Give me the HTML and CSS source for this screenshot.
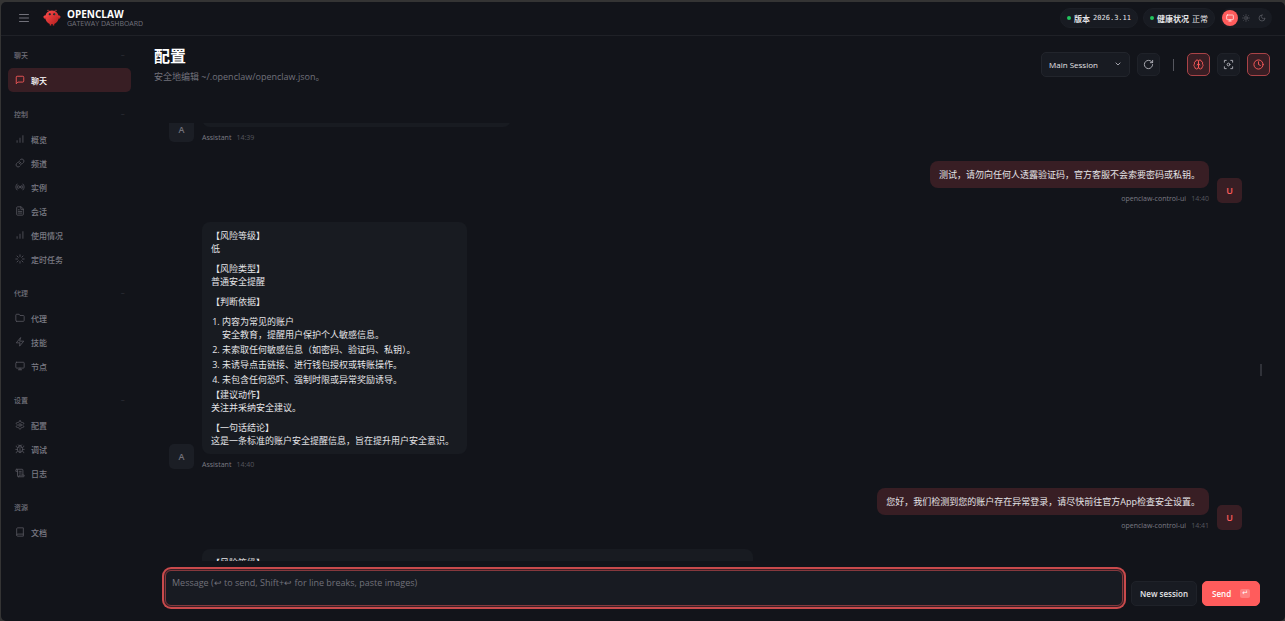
FILE: index.html
```html
<!DOCTYPE html>
<html lang="zh-CN">
  <head>
    <meta charset="UTF-8" />
    <meta name="viewport" content="width=device-width, initial-scale=1" />
    <title>OpenClaw Control</title>
    <link rel="stylesheet" href="styles.css">
  </head>
  <body>
    <div class="shell">
      <header class="topbar">
        <button class="menu-btn" aria-label="Menu">
          <svg class="icon" viewBox="0 0 24 24"><path d="M3 5h18M3 12h18M3 19h18" /></svg>
        </button>
        <svg class="logo" viewBox="0 0 120 120">
          <defs>
            <linearGradient id="lobster" x1="0" y1="0" x2="1" y2="1">
              <stop offset="0" stop-color="#ff4d4d" />
              <stop offset="1" stop-color="#b01c1c" />
            </linearGradient>
          </defs>
          <path fill="url(#lobster)" d="M60 10C30 10 15 35 15 55s15 40 30 45v10h10v-10s5 2 10 0v10h10v-10c15-5 30-25 30-45S90 10 60 10z" />
          <path fill="url(#lobster)" d="M20 45C5 40 0 50 5 60s15 5 20-5c3-7 0-10-5-10zM100 45c15-5 20 5 15 15s-15 5-20-5c-3-7 0-10 5-10z" />
          <path fill="none" stroke="#ff4d4d" stroke-width="4" stroke-linecap="round" d="M45 15Q35 5 30 8M75 15Q85 5 90 8" />
          <circle cx="45" cy="35" r="7" fill="#08131a" />
          <circle cx="75" cy="35" r="7" fill="#08131a" />
          <circle cx="46" cy="34" r="3" fill="#00c9b7" />
          <circle cx="76" cy="34" r="3" fill="#00c9b7" />
        </svg>
        <div class="brand">
          <div class="brand-title">OPENCLAW</div>
          <div class="brand-sub">GATEWAY DASHBOARD</div>
        </div>
        <div class="status">
          <div class="pill"><span class="dot"></span><b>版本</b><span class="mono">2026.3.11</span></div>
          <div class="pill"><span class="dot"></span><b>健康状况</b><span>正常</span></div>
          <div class="theme">
            <button class="theme-btn active" aria-label="System">
              <svg class="icon" viewBox="0 0 24 24"><rect x="2" y="3" width="20" height="14" rx="2" /><path d="M8 21h8M12 17v4" /></svg>
            </button>
            <button class="theme-btn" aria-label="Light">
              <svg class="icon" viewBox="0 0 24 24"><circle cx="12" cy="12" r="4" /><path d="M12 2v2M12 20v2M5 5l1.4 1.4M17.6 17.6L19 19M2 12h2M20 12h2M5 19l1.4-1.4M17.6 6.4L19 5" /></svg>
            </button>
            <button class="theme-btn" aria-label="Dark">
              <svg class="icon" viewBox="0 0 24 24"><path d="M12 3a6 6 0 0 0 9 9 9 9 0 1 1-9-9z" /></svg>
            </button>
          </div>
        </div>
      </header>

      <nav class="nav">
        <div class="nav-group">
          <button class="nav-label">聊天<span>−</span></button>
          <a class="nav-item active" href="#chat">
            <svg class="icon" viewBox="0 0 24 24"><path d="M21 15a2 2 0 0 1-2 2H7l-4 4V5a2 2 0 0 1 2-2h14a2 2 0 0 1 2 2z" /></svg>聊天</a>
        </div>
        <div class="nav-group">
          <button class="nav-label">控制<span>−</span></button>
          <a class="nav-item" href="#overview">
            <svg class="icon" viewBox="0 0 24 24"><path d="M5 20v-4M12 20V10M19 20V4" /></svg>概览</a>
          <a class="nav-item" href="#channels">
            <svg class="icon" viewBox="0 0 24 24"><path d="M10 13a5 5 0 0 0 7.5.5l3-3a5 5 0 0 0-7-7l-1.7 1.7" /><path d="M14 11a5 5 0 0 0-7.5-.5l-3 3a5 5 0 0 0 7 7l1.7-1.7" /></svg>频道</a>
          <a class="nav-item" href="#instances">
            <svg class="icon" viewBox="0 0 24 24"><circle cx="12" cy="12" r="2" /><path d="M4.9 19.1C1 15.2 1 8.8 4.9 4.9M7.8 16.2c-2.3-2.3-2.3-6.100 0-8.500M16.2 7.8c2.3 2.3 2.3 6.100 0 8.500M19.1 4.9C23 8.8 23 15.1 19.1 19" /></svg>实例</a>
          <a class="nav-item" href="#sessions">
            <svg class="icon" viewBox="0 0 24 24"><path d="M14 2H6a2 2 0 0 0-2 2v16a2 2 0 0 0 2 2h12a2 2 0 0 0 2-2V8zM14 2v6h6M16 13H8M16 17H8M10 9H8" /></svg>会话</a>
          <a class="nav-item" href="#usage">
            <svg class="icon" viewBox="0 0 24 24"><path d="M5 20v-4M12 20V10M19 20V4" /></svg>使用情况</a>
          <a class="nav-item" href="#cron">
            <svg class="icon" viewBox="0 0 24 24"><path d="M12 2v4M16.2 7.8l2.9-2.9M18 12h4M16.2 16.2l2.9 2.9M12 18v4M4.9 19.1l2.9-2.9M2 12h4M4.9 4.9l2.9 2.9" /></svg>定时任务</a>
        </div>
        <div class="nav-group">
          <button class="nav-label">代理<span>−</span></button>
          <a class="nav-item" href="#agents">
            <svg class="icon" viewBox="0 0 24 24"><path d="M4 20h16a2 2 0 0 0 2-2V8a2 2 0 0 0-2-2h-8l-2-3H4a2 2 0 0 0-2 2v13a2 2 0 0 0 2 2z" /></svg>代理</a>
          <a class="nav-item" href="#skills">
            <svg class="icon" viewBox="0 0 24 24"><path d="M13 2L3 14h9l-1 8 10-12h-9z" /></svg>技能</a>
          <a class="nav-item" href="#nodes">
            <svg class="icon" viewBox="0 0 24 24"><rect x="2" y="3" width="20" height="14" rx="2" /><path d="M8 21h8M12 17v4" /></svg>节点</a>
        </div>
        <div class="nav-group">
          <button class="nav-label">设置<span>−</span></button>
          <a class="nav-item" href="#config">
            <svg class="icon" viewBox="0 0 24 24"><path d="M12.2 2h-.4a2 2 0 0 0-2 2v.2a2 2 0 0 1-1 1.7l-.4.3a2 2 0 0 1-2 0l-.2-.1a2 2 0 0 0-2.7.7l-.2.4a2 2 0 0 0 .7 2.7l.2.1a2 2 0 0 1 1 1.7v.5a2 2 0 0 1-1 1.8l-.2.1a2 2 0 0 0-.7 2.7l.2.4a2 2 0 0 0 2.7.7l.2-.1a2 2 0 0 1 2 0l.4.3a2 2 0 0 1 1 1.7v.2a2 2 0 0 0 2 2h.4a2 2 0 0 0 2-2v-.2a2 2 0 0 1 1-1.7l.4-.3a2 2 0 0 1 2 0l.2.1a2 2 0 0 0 2.7-.7l.2-.4a2 2 0 0 0-.7-2.7l-.2-.1a2 2 0 0 1-1-1.8v-.5a2 2 0 0 1 1-1.7l.2-.1a2 2 0 0 0 .7-2.7l-.2-.4a2 2 0 0 0-2.7-.7l-.2.1a2 2 0 0 1-2 0l-.4-.3a2 2 0 0 1-1-1.7V4a2 2 0 0 0-2-2z" /><circle cx="12" cy="12" r="3" /></svg>配置</a>
          <a class="nav-item" href="#debug">
            <svg class="icon" viewBox="0 0 24 24"><path d="M8 2l2 2M14 4l2-2M9 7V6a3 3 0 0 1 6 0v1M12 20a6 6 0 0 1-6-6v-3a4 4 0 0 1 4-4h4a4 4 0 0 1 4 4v3a6 6 0 0 1-6 6zM12 20v-9M6.5 9C4.6 8.8 3 7.1 3 5M6 13H2M3 21c0-2.1 1.7-3.9 3.8-4M21 5c0 2.1-1.6 3.8-3.5 4M22 13h-4M17.2 17c2.1.1 3.8 1.9 3.8 4" /></svg>调试</a>
          <a class="nav-item" href="#logs">
            <svg class="icon" viewBox="0 0 24 24"><path d="M8 21h12a2 2 0 0 0 2-2v-2H10v2a2 2 0 1 1-4 0V5a2 2 0 1 0-4 0v3h4M19 17V5a2 2 0 0 0-2-2H4M15 8h-5M15 12h-5" /></svg>日志</a>
        </div>
        <div class="nav-group">
          <div class="nav-label">资源</div>
          <a class="nav-item" href="#docs">
            <svg class="icon" viewBox="0 0 24 24"><path d="M4 19.5V4.5A2.5 2.5 0 0 1 6.5 2H20v20H6.5a2.5 2.5 0 0 1 0-5H20" /></svg>文档</a>
        </div>
      </nav>

      <main class="content">
        <div class="page-head">
          <div>
            <h1>配置</h1>
            <p class="page-sub">安全地编辑 ~/.openclaw/openclaw.json。</p>
          </div>
          <div class="controls">
            <select class="session" aria-label="Session">
              <option>Main Session</option>
            </select>
            <button class="icon-btn" aria-label="Refresh">
              <svg class="icon" viewBox="0 0 24 24"><path d="M21 12a9 9 0 1 1-9-9c2.5 0 4.9 1 6.7 2.7L21 8M21 3v5h-5" /></svg>
            </button>
            <span class="sep"></span>
            <button class="icon-btn on" aria-label="Thinking">
              <svg class="icon" viewBox="0 0 24 24"><path d="M12 5a3 3 0 1 0-6 .1 4 4 0 0 0-2.5 5.8 4 4 0 0 0 .5 6.6A4 4 0 1 0 12 18zM12 5a3 3 0 1 1 6 .1 4 4 0 0 1 2.5 5.8 4 4 0 0 1-.5 6.6A4 4 0 1 1 12 18zM15 13a4.500 4.500 0 0 1-3-4 4.500 4.500 0 0 1-3 4" /></svg>
            </button>
            <button class="icon-btn" aria-label="Focus">
              <svg class="icon" viewBox="0 0 24 24"><path d="M3 7V3h4M21 7V3h-4M3 17v4h4M21 17v4h-4" /><circle cx="12" cy="12" r="3" /></svg>
            </button>
            <button class="icon-btn on" aria-label="Cron sessions">
              <svg class="icon" viewBox="0 0 24 24"><circle cx="12" cy="12" r="10" /><path d="M12 6v6l4 2" /></svg>
            </button>
          </div>
        </div>

        <div class="chat">
          <div class="thread">
            <div class="group">
              <div class="avatar">A</div>
              <div class="msg">
                <div class="bubble short"></div>
                <div class="meta"><b>Assistant</b><time>14:39</time></div>
              </div>
            </div>
            <div class="group user">
              <div class="avatar">U</div>
              <div class="msg">
                <div class="bubble"><p>测试，请勿向任何人透露验证码，官方客服不会索要密码或私钥。</p></div>
                <div class="meta"><b>openclaw-control-ui</b><time>14:40</time></div>
              </div>
            </div>
            <div class="group">
              <div class="avatar">A</div>
              <div class="msg">
                <div class="bubble">
                  <p>【风险等级】<br>低</p>
                  <p>【风险类型】<br>普通安全提醒</p>
                  <p>【判断依据】</p>
                  <ol>
                    <li>内容为常见的账户<br>安全教育，提醒用户保护个人敏感信息。</li>
                    <li>未索取任何敏感信息（如密码、验证码、私钥）。</li>
                    <li>未诱导点击链接、进行钱包授权或转账操作。</li>
                    <li>未包含任何恐吓、强制时限或异常奖励诱导。</li>
                  </ol>
                  <p>【建议动作】<br>关注并采纳安全建议。</p>
                  <p>【一句话结论】<br>这是一条标准的账户安全提醒信息，旨在提升用户安全意识。</p>
                </div>
                <div class="meta"><b>Assistant</b><time>14:40</time></div>
              </div>
            </div>
            <div class="group user">
              <div class="avatar">U</div>
              <div class="msg">
                <div class="bubble"><p>您好，我们检测到您的账户存在异常登录，请尽快前往官方App检查安全设置。</p></div>
                <div class="meta"><b>openclaw-control-ui</b><time>14:41</time></div>
              </div>
            </div>
            <div class="group">
              <div class="avatar-space"></div>
              <div class="msg">
                <div class="bubble wide"><p>【风险等级】</p></div>
              </div>
            </div>
          </div>
          <div class="scroll-thumb"></div>
        </div>

        <form class="composer">
          <textarea class="input" aria-label="Message" placeholder="Message (↩ to send, Shift+↩ for line breaks, paste images)" autofocus></textarea>
          <button type="button" class="btn">New session</button>
          <button type="button" class="btn primary">Send <kbd>↵</kbd></button>
        </form>
      </main>
    </div>
  </body>
</html>
```
FILE: styles.css
```css
* {
  box-sizing: border-box;
}
body {
  margin: 0;
  background: #343434;
  color: #e4e4e7;
  font-family: "Open Sans", "Noto Sans CJK SC", sans-serif;
  font-size: 9px;
}
button,
select,
textarea {
  font: inherit;
  color: inherit;
}
button {
  border: 0;
  padding: 0;
  background: none;
}
.icon {
  width: 10px;
  height: 10px;
  flex: none;
  fill: none;
  stroke: currentColor;
  stroke-width: 2;
  stroke-linecap: round;
  stroke-linejoin: round;
}
.shell {
  display: grid;
  grid-template: 34px 1fr / 138px 1fr;
  height: calc(100vh - 2px);
  margin: 2px 0 0 1px;
  background: #12141a;
  border-radius: 5px;
  overflow: hidden;
}

/* top bar */
.topbar {
  grid-column: 1 / -1;
  display: flex;
  align-items: center;
  padding: 0 13px 1px 17px;
  border-bottom: 1px solid #1f2127;
}
.menu-btn {
  display: flex;
  color: #71717a;
}
.menu-btn .icon {
  width: 12px;
  height: 12px;
}
.logo {
  width: 18px;
  height: 18px;
  margin: 0 6px 0 13px;
}
.brand-title {
  font-size: 10px;
  line-height: 11px;
  font-weight: 700;
  color: #fff;
}
.brand-sub {
  font-size: 7px;
  line-height: 8px;
  color: #71717a;
}
.status {
  display: flex;
  align-items: center;
  gap: 5px;
  margin-left: auto;
}
.pill {
  display: flex;
  align-items: center;
  gap: 3px;
  height: 20px;
  padding: 0 6px;
  border: 1px solid #1c1f26;
  border-radius: 10px;
  background: #181b22;
  font-size: 8px;
}
.dot {
  width: 4px;
  height: 4px;
  border-radius: 50%;
  background: #22c55e;
}
.mono {
  font-family: "DejaVu Sans Mono", monospace;
  font-size: 7px;
}
.theme {
  display: flex;
  padding: 2px;
  border-radius: 10px;
  background: #181b22;
  color: #62636b;
}
.theme-btn {
  display: grid;
  place-items: center;
  width: 16px;
  height: 16px;
  border-radius: 50%;
}
.theme-btn .icon {
  width: 8px;
  height: 8px;
}
.theme-btn.active {
  background: #ff5c5c;
  color: #fff;
}

/* sidebar */
.nav {
  padding: 9px 8px 0 7px;
  color: #7b7b84;
}
.nav-group {
  margin-bottom: 12px;
}
.nav-label {
  display: flex;
  align-items: center;
  justify-content: space-between;
  width: 100%;
  height: 20px;
  margin-bottom: 3px;
  padding: 0 6px;
  font-size: 7px;
  font-weight: 500;
  color: #71717a;
}
.nav-label span {
  color: #3c3d44;
}
.nav-item {
  display: flex;
  align-items: center;
  gap: 6px;
  height: 24px;
  padding: 0 7px;
  border-radius: 5px;
  font-size: 8px;
  font-weight: 500;
  color: inherit;
  text-decoration: none;
}
.nav-item .icon {
  color: #55565e;
}
.nav-item.active {
  background: #381e24;
  color: #fff;
}
.nav-item.active .icon {
  color: #ff5c5c;
}

/* page */
.content {
  display: flex;
  flex-direction: column;
  min-width: 0;
  min-height: 0;
  padding: 10px 15px 15px;
}
.page-head {
  display: flex;
  justify-content: space-between;
  height: 77px;
}
h1 {
  margin: 0;
  font-size: 16px;
  line-height: 21px;
  color: #fff;
}
.page-sub {
  margin: 3px 0 0;
  line-height: 13px;
  color: #71717a;
}
.controls {
  display: flex;
  align-items: center;
  gap: 7px;
  height: 36px;
}
.controls .icon {
  width: 11px;
  height: 11px;
}
.session {
  width: 89px;
  height: 25px;
  padding: 0 7px;
  appearance: none;
  border: 1px solid #22252c;
  border-radius: 5px;
  background: #181b22 url("data:image/svg+xml,%3Csvg xmlns='http://www.w3.org/2000/svg' viewBox='0 0 24 24' fill='none' stroke='%23a1a1aa' stroke-width='3'%3E%3Cpath d='M5 8l7 7 7-7'/%3E%3C/svg%3E") no-repeat right 7px center / 8px;
  font-size: 8px;
}
.icon-btn {
  display: grid;
  place-items: center;
  width: 23px;
  height: 23px;
  border: 1px solid #1f2229;
  border-radius: 5px;
  background: #181b22;
  color: #b4b4bb;
}
.icon-btn.on {
  border-color: #a94347;
  background: #381e24;
  color: #ff5c5c;
}
.sep {
  width: 1px;
  height: 12px;
  margin: 2px 6px 0;
  background: #55565e;
}

/* chat */
.chat {
  display: flex;
  flex: 1;
  min-height: 0;
  margin-right: 8px;
  overflow: hidden;
}
.thread {
  flex: 1;
  margin-top: -27px;
  padding: 0 18px 0 15px;
}
.group {
  display: flex;
  align-items: flex-end;
  gap: 8px;
  margin-bottom: 19px;
}
.group.user {
  flex-direction: row-reverse;
}
.avatar {
  display: grid;
  place-items: center;
  width: 25px;
  height: 25px;
  border-radius: 5px;
  background: #1b1e25;
  color: #71717a;
  font-weight: 600;
}
.avatar-space {
  width: 25px;
}
.bubble {
  min-width: 265px;
  padding: 7px 9px;
  border-radius: 8px;
  background: #181b21;
  line-height: 13px;
}
.bubble.short {
  width: 309px;
  height: 31px;
}
.bubble.wide {
  width: 551px;
}
.bubble p {
  margin: 0;
}
.bubble p + p {
  margin-top: 7px;
}
.bubble ol {
  margin: 7px 0 2px;
  padding-left: 11px;
}
.bubble li + li {
  margin-top: 2px;
}
.meta {
  display: flex;
  gap: 5px;
  margin-top: 6px;
  font-size: 7px;
  line-height: 9px;
  color: #55565e;
}
.meta b {
  font-weight: 500;
  color: #7b7b84;
}
.user .avatar {
  background: #381e24;
  color: #ff5c5c;
}
.user .bubble {
  background: #381e24;
}
.user .meta {
  justify-content: flex-end;
}
.scroll-thumb {
  align-self: center;
  width: 2px;
  height: 12px;
  margin-top: 56px;
  background: #303239;
}

/* composer */
.composer {
  display: flex;
  align-items: flex-end;
  gap: 5px;
  padding: 9px 10px 0 11px;
}
.input {
  flex: 1;
  height: 36px;
  margin-right: 3px;
  padding: 5px 6px;
  resize: none;
  outline: 0;
  border: 1px solid #85383d;
  border-radius: 6px;
  background: #181b22;
  box-shadow: 0 0 0 1px #3a2026, 0 0 0 3px #c94a4c;
  line-height: 14px;
}
.input::placeholder {
  color: #71717a;
}
.btn {
  height: 25px;
  padding: 0 8px;
  border: 1px solid #1f2229;
  border-radius: 5px;
  background: #181b22;
  font-size: 8px;
  font-weight: 600;
}
.btn.primary {
  display: flex;
  align-items: center;
  gap: 9px;
  padding: 0 9px;
  border-color: #ff5c5c;
  background: #ff5c5c;
  color: #fff;
}
kbd {
  padding: 0 2px;
  border-radius: 2px;
  background: #ff8080;
  font: 7px/9px "DejaVu Sans", sans-serif;
}
```
